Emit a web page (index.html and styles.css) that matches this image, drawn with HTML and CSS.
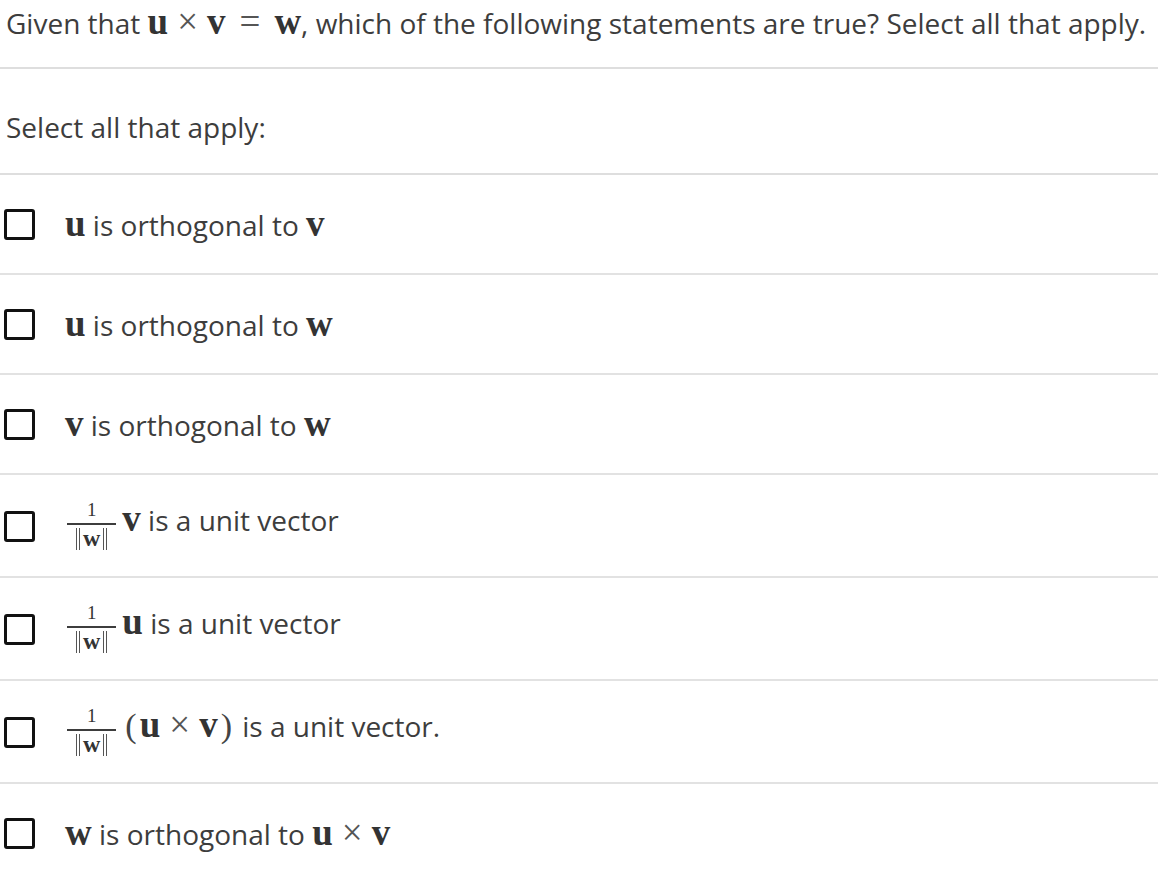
FILE: index.html
```html
<!DOCTYPE html>
<html lang="en">
<head>
<meta charset="utf-8">
<title>Cross product question</title>
<link rel="stylesheet" href="styles.css">
</head>
<body>
<div class="page">
  <p class="stem">Given that <span class="m"><b>u</b><span class="op">×</span><b>v</b><span class="rel">=</span><b>w</b></span>, which of the following statements are true? Select all that apply.</p>
  <p class="prompt">Select all that apply:</p>
  <ul class="options">
    <li class="option"><span class="box"></span><span class="label"><span class="m"><b>u</b></span> is orthogonal to <span class="m"><b>v</b></span></span></li>
    <li class="option"><span class="box"></span><span class="label"><span class="m"><b>u</b></span> is orthogonal to <span class="m"><b>w</b></span></span></li>
    <li class="option"><span class="box"></span><span class="label"><span class="m"><b>v</b></span> is orthogonal to <span class="m"><b>w</b></span></span></li>
    <li class="option option--frac"><span class="box"></span><span class="label"><span class="m"><span class="frac"><span class="num">1</span><span class="bar"></span><span class="den"><span class="norm"></span><b>w</b><span class="norm"></span></span></span><b>v</b></span> is a unit vector</span></li>
    <li class="option option--frac"><span class="box"></span><span class="label"><span class="m"><span class="frac"><span class="num">1</span><span class="bar"></span><span class="den"><span class="norm"></span><b>w</b><span class="norm"></span></span></span><b>u</b></span> is a unit vector</span></li>
    <li class="option option--frac"><span class="box"></span><span class="label"><span class="m"><span class="frac"><span class="num">1</span><span class="bar"></span><span class="den"><span class="norm"></span><b>w</b><span class="norm"></span></span></span><span class="paren">(</span><b>u</b><span class="op">×</span><b>v</b><span class="paren">)</span></span> is a unit vector.</span></li>
    <li class="option"><span class="box"></span><span class="label"><span class="m"><b>w</b></span> is orthogonal to <span class="m"><b>u</b><span class="op">×</span><b>v</b></span></span></li>
  </ul>
</div>
</body>
</html>
```
FILE: styles.css
```css
html, body {
  margin: 0;
  padding: 0;
  background: #ffffff;
}

body {
  font-family: "Open Sans", "Liberation Sans", sans-serif;
  font-size: 28px;
  color: #3d3d3d;
}

.page {
  width: 1158px;
}

.stem {
  margin: 0;
  padding: 4px 6px 26px;
  line-height: 36px;
  border-bottom: 2px solid #dedede;
  white-space: nowrap;
}

.prompt {
  margin: 0;
  padding: 40px 6px 28px;
  line-height: 36px;
  border-bottom: 2px solid #dedede;
}

.options {
  list-style: none;
  margin: 0;
  padding: 0;
}

.option {
  display: flex;
  align-items: center;
  height: 34px;
  padding: 32px 0;
  border-bottom: 2px solid #e2e2e2;
}

.option--frac {
  padding: 34px 0 33px;
}

.box {
  flex: none;
  width: 25px;
  height: 25px;
  margin-left: 4px;
  border: 3px solid #111111;
  border-radius: 3px;
}

.label {
  margin-left: 30px;
  line-height: 34px;
  white-space: nowrap;
}

.m {
  font-family: "Liberation Serif", "Times New Roman", serif;
  font-size: 37px;
  color: #333333;
  white-space: nowrap;
}

.m b {
  font-weight: 700;
}

.op {
  font-weight: 400;
  padding: 0 9px;
  color: #555555;
}

.rel {
  font-weight: 400;
  padding: 0 14px;
  color: #555555;
}

.frac {
  display: inline-flex;
  flex-direction: column;
  align-items: center;
  vertical-align: 15px;
  margin: 0 6px 0 2px;
  line-height: 16px;
}

.num {
  font-size: 19px;
  padding-bottom: 5px;
}

.bar {
  align-self: stretch;
  height: 2px;
  background: #3d3d3d;
}

.den {
  display: flex;
  align-items: flex-end;
  gap: 3px;
  padding: 3px 9px 0;
  height: 25px;
  box-sizing: border-box;
  font-size: 24px;
  line-height: 18px;
}

.norm {
  width: 2px;
  height: 22px;
  border-left: 1.5px solid #555555;
  border-right: 1.5px solid #555555;
}

.den b {
  color: #333333;
  padding-bottom: 3px;
}

.paren {
  font-size: 34px;
  font-weight: 400;
  color: #444444;
  padding: 0 3px;
}
```
